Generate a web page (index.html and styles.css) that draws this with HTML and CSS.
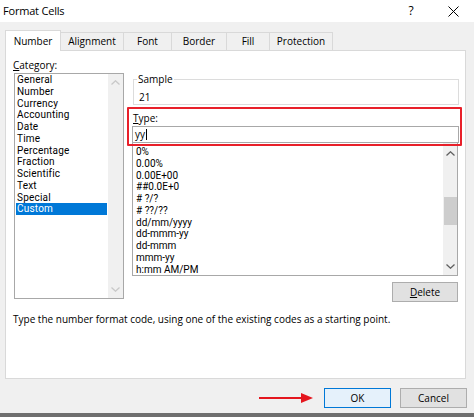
FILE: index.html
```html
<!DOCTYPE html>
<html lang="en">
<head>
<meta charset="utf-8">
<title>Format Cells</title>
<link rel="stylesheet" href="styles.css">
</head>
<body>
<div class="dialog">
  <div class="titlebar">
    <span class="title">Format Cells</span>
    <div class="title-btns">
      <span class="help">?</span>
      <span class="close"><svg width="11" height="11" viewBox="0 0 11 11"><path d="M0.5 0.5 L10.5 10.5 M10.5 0.5 L0.5 10.5" stroke="#000" stroke-width="1" fill="none"/></svg></span>
    </div>
  </div>

  <div class="tabs">
    <div class="tab active w-number">Number</div>
    <div class="tab w-alignment">Alignment</div>
    <div class="tab w-font">Font</div>
    <div class="tab w-border">Border</div>
    <div class="tab w-fill">Fill</div>
    <div class="tab w-protection">Protection</div>
  </div>

  <div class="panel">
    <div class="main">
      <div class="category">
        <div class="label"><u>C</u>ategory:</div>
        <div class="listbox cat-list">
          <ul class="items">
            <li>General</li>
            <li>Number</li>
            <li>Currency</li>
            <li>Accounting</li>
            <li>Date</li>
            <li>Time</li>
            <li>Percentage</li>
            <li>Fraction</li>
            <li>Scientific</li>
            <li>Text</li>
            <li>Special</li>
            <li class="selected">Custom</li>
          </ul>
          <div class="scrollbar disabled">
            <div class="sb-btn sb-up-cat"><svg width="9" height="5" viewBox="0 0 9 5"><path d="M0.5 4.5 L4.5 0.8 L8.5 4.5" stroke="#c8c8c8" stroke-width="1.3" fill="none"/></svg></div>
            <div class="sb-track"></div>
            <div class="sb-btn sb-down-cat"><svg width="9" height="5" viewBox="0 0 9 5"><path d="M0.5 0.5 L4.5 4.2 L8.5 0.5" stroke="#c8c8c8" stroke-width="1.3" fill="none"/></svg></div>
          </div>
        </div>
      </div>

      <div class="right">
        <fieldset class="sample">
          <legend>Sample</legend>
          <div class="sample-val">21</div>
        </fieldset>
        <div class="type-label"><u>T</u>ype:</div>
        <div class="type-input">yy<span class="caret"></span></div>
        <div class="listbox fmt-list">
          <ul class="items">
            <li>0%</li>
            <li>0.00%</li>
            <li>0.00E+00</li>
            <li>##0.0E+0</li>
            <li># ?/?</li>
            <li># ??/??</li>
            <li>dd/mm/yyyy</li>
            <li>dd-mmm-yy</li>
            <li>dd-mmm</li>
            <li>mmm-yy</li>
            <li>h:mm AM/PM</li>
          </ul>
          <div class="scrollbar">
            <div class="sb-btn sb-up"><svg width="9" height="5" viewBox="0 0 9 5"><path d="M0.5 4.5 L4.5 0.8 L8.5 4.5" stroke="#606060" stroke-width="1.3" fill="none"/></svg></div>
            <div class="sb-track"><div class="sb-thumb"></div></div>
            <div class="sb-btn sb-down"><svg width="9" height="5" viewBox="0 0 9 5"><path d="M0.5 0.5 L4.5 4.2 L8.5 0.5" stroke="#606060" stroke-width="1.3" fill="none"/></svg></div>
          </div>
        </div>
        <div class="delete-row"><button class="btn delete"><u>D</u>elete</button></div>
        <div class="highlight"></div>
      </div>
    </div>
    <p class="desc">Type the number format code, using one of the existing codes as a starting point.</p>
  </div>

  <div class="footer">
    <svg class="arrow" width="56" height="12" viewBox="0 0 56 12"><path d="M1 6 H45" stroke="#e4161e" stroke-width="2"/><path d="M43 1 L55 6 L43 11 Z" fill="#e4161e"/></svg>
    <button class="btn ok">OK</button>
    <button class="btn cancel">Cancel</button>
  </div>
  <div class="bottom-strip"></div>
</div>
</body>
</html>
```

FILE: styles.css
```css
* { box-sizing: border-box; }
html, body { margin: 0; padding: 0; }
body {
  width: 474px;
  height: 417px;
  overflow: hidden;
  background: #f0f0f0;
  font-family: "Open Sans", "Noto Sans", sans-serif;
  font-size: 10px;
  color: #000;
}
u { text-decoration: underline; text-underline-offset: 1px; }

.dialog { display: flex; flex-direction: column; height: 417px; }

/* title bar */
.titlebar {
  height: 22px;
  flex: none;
  background: #fff;
  display: flex;
  align-items: center;
  justify-content: space-between;
  padding: 0 11px 0 3px;
}
.title { font-size: 11px; letter-spacing: -0.2px; line-height: 22px; }
.title-btns { display: flex; align-items: center; gap: 22px; }
.help { width: 20px; text-align: center; font-size: 12px; line-height: 22px; }
.close { width: 20px; height: 22px; display: flex; align-items: center; justify-content: center; }

/* tabs */
.tabs {
  flex: none;
  display: flex;
  align-items: flex-end;
  margin-top: 8px;
  padding-left: 5px;
  height: 21px;
  position: relative;
  z-index: 1;
  margin-bottom: -1px;
}
.tab {
  height: 18px;
  margin-bottom: 1px;
  margin-left: -1px;
  border: 1px solid #d9d9d9;
  border-bottom: none;
  background: #f0f0f0;
  text-align: center;
  line-height: 17px;
}
.tab:first-child { margin-left: 0; }
.tab.active {
  height: 21px;
  margin-bottom: 0;
  background: #fff;
  line-height: 20px;
}
.w-number { width: 56px; }
.w-alignment { width: 64px; }
.w-font { width: 49px; }
.w-border { width: 56px; }
.w-fill { width: 44px; }
.w-protection { width: 64px; }

/* panel */
.panel {
  flex: none;
  margin: 0 8px 0 5px;
  height: 329px;
  background: #fff;
  border: 1px solid #d9d9d9;
  padding: 8px 6px 0 7px;
}
.main { display: flex; }
.category { width: 111px; flex: none; }
.label { line-height: 12px; height: 12px; margin-bottom: 2px; }

.listbox {
  border: 1px solid #a8a8a8;
  display: flex;
  background: #fff;
}
.items {
  list-style: none;
  margin: 0;
  flex: 1;
  font-family: Roboto, "Open Sans", sans-serif;
  font-size: 10px;
}
.items li { white-space: nowrap; line-height: 11.75px; height: 11.75px; }

.cat-list { margin-left: 1px; width: 110px; height: 226px; }
.cat-list .items { padding: 0 1px; }
.cat-list .items li { padding-left: 1px; letter-spacing: 0.2px; }
.cat-list .items li.selected { background: #0078d7; color: #fff; }

.scrollbar {
  width: 15px;
  flex: none;
  display: flex;
  flex-direction: column;
  background: #f0f0f0;
}
.sb-btn { display: flex; align-items: center; justify-content: center; height: 17px; flex: none; }
.sb-btn svg { display: block; }
.sb-track { flex: 1; }

/* right column */
.right { position: relative; margin-left: 8px; width: 327px; padding-top: 14px; }
.sample {
  margin: 0 0 0 1px;
  width: 326px;
  border: 1px solid #dcdcdc;
  padding: 0 0 1px 3px;
}
.sample legend { padding: 0 1px; line-height: 12px; }
.sample-val { line-height: 12px; margin-top: 6px; padding-left: 2px; }

.type-label { line-height: 12px; margin: 7px 0 2px 1px; }
.type-input {
  height: 17px;
  border: 1px solid #a8a8a8;
  padding-left: 2px;
  line-height: 15px;
  display: flex;
  align-items: center;
}
.caret { display: inline-block; width: 1px; height: 11px; background: #000; margin-left: 0.5px; }

.fmt-list { width: 326px; height: 133px; border-top: none; }
.fmt-list .items { padding: 3px 0 0 3px; }
.fmt-list .scrollbar { width: 14px; }
.sb-up { height: 20px; }
.sb-thumb { width: 13px; margin: 34px auto 0; height: 28px; background: #cdcdcd; }

.delete-row { display: flex; justify-content: flex-end; margin-top: 6px; padding-right: 1px; }

.btn {
  font: inherit;
  color: #000;
  height: 20px;
  padding: 0;
  border: 1px solid #adadad;
  background: #e1e1e1;
  border-radius: 0;
  line-height: 18px;
}
.delete { width: 66px; }

.highlight {
  position: absolute;
  left: -5px;
  top: 48px;
  width: 335px;
  height: 39px;
  border: 2px solid #e8202a;
  border-radius: 1px;
  pointer-events: none;
}

.desc { margin: 11px 0 0; line-height: 12px; }

/* footer */
.footer {
  flex: none;
  display: flex;
  justify-content: flex-end;
  align-items: center;
  gap: 9px;
  margin-top: 9px;
  padding-right: 7px;
  height: 20px;
}
.arrow { display: block; margin-right: 1px; }
.ok { width: 67px; background: #e5f1fb; border-color: #0078d7; }
.cancel { width: 67px; }

.bottom-strip { margin-top: auto; height: 4px; background: #6e6e6e; flex: none; }
```
